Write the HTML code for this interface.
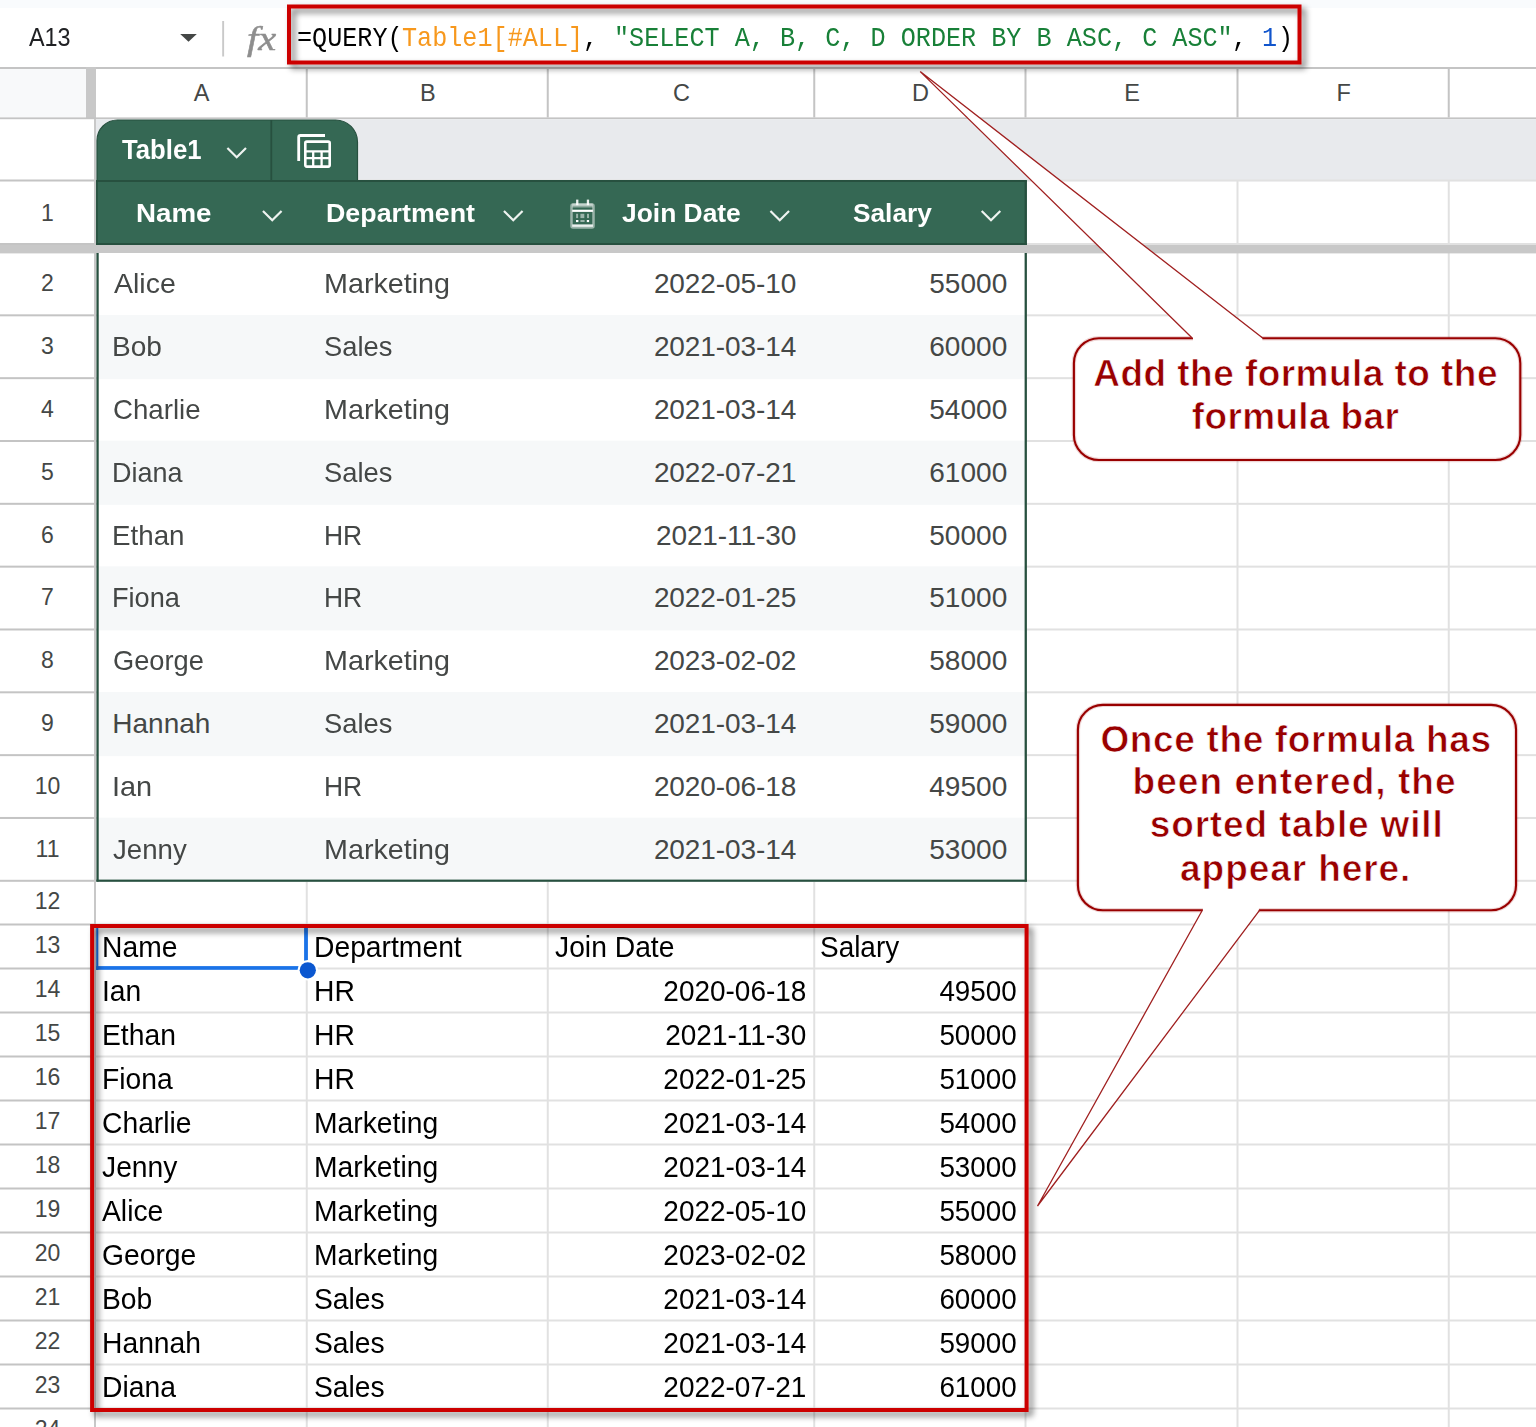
<!DOCTYPE html>
<html lang="en">
<head>
<meta charset="utf-8">
<title>QUERY sorted table – Google Sheets</title>
<style>
html,body{margin:0;padding:0;background:#fff}
body{width:1536px;height:1427px;position:relative;overflow:hidden;font-family:'Liberation Sans',sans-serif}
#gfx{position:absolute;left:0;top:0}
.t{position:absolute;white-space:pre;line-height:1;margin:0;padding:0}
.c{-webkit-text-stroke:0.7px #fff}
.fx{-webkit-text-stroke:0.5px #8e8e8e}
</style>
</head>
<body>
<svg id="gfx" width="1536" height="1427" viewBox="0 0 1536 1427">
<rect x="0" y="0" width="1536" height="8" fill="#f9fbfd"/>
<rect x="0" y="67" width="1536" height="2" fill="#c4c4c4"/>
<rect x="222.2" y="21" width="1.9" height="35.5" fill="#c9c9c9"/>
<rect x="0" y="69" width="86" height="48.5" fill="#f8f9fa"/>
<rect x="86" y="67" width="10" height="52" fill="#c8c8c8"/>
<rect x="0" y="117.4" width="1536" height="1.8" fill="#c4c4c4"/>
<rect x="305.75" y="69" width="2" height="48.5" fill="#c4c4c4"/>
<rect x="546.75" y="69" width="2" height="48.5" fill="#c4c4c4"/>
<rect x="813.25" y="69" width="2" height="48.5" fill="#c4c4c4"/>
<rect x="1024.5" y="69" width="2" height="48.5" fill="#c4c4c4"/>
<rect x="1236.5" y="69" width="2" height="48.5" fill="#c4c4c4"/>
<rect x="1447.75" y="69" width="2" height="48.5" fill="#c4c4c4"/>
<rect x="94" y="119" width="2" height="1308" fill="#c8c8c8"/>
<rect x="96" y="119.2" width="1440" height="62" fill="#e8eaed"/>
<rect x="305.75" y="181" width="2" height="1246" fill="#e1e1e1"/>
<rect x="546.75" y="181" width="2" height="1246" fill="#e1e1e1"/>
<rect x="813.25" y="181" width="2" height="1246" fill="#e1e1e1"/>
<rect x="1024.5" y="181" width="2" height="1246" fill="#e1e1e1"/>
<rect x="1236.5" y="181" width="2" height="1246" fill="#e1e1e1"/>
<rect x="1447.75" y="181" width="2" height="1246" fill="#e1e1e1"/>
<rect x="0" y="179.5" width="94" height="2" fill="#c4c4c4"/>
<rect x="96" y="179.5" width="1440" height="2" fill="#e1e1e1"/>
<rect x="0" y="243" width="94" height="2" fill="#c4c4c4"/>
<rect x="96" y="243" width="1440" height="2" fill="#e1e1e1"/>
<rect x="0" y="314.33" width="94" height="2" fill="#c4c4c4"/>
<rect x="96" y="314.33" width="1440" height="2" fill="#e1e1e1"/>
<rect x="0" y="377.16" width="94" height="2" fill="#c4c4c4"/>
<rect x="96" y="377.16" width="1440" height="2" fill="#e1e1e1"/>
<rect x="0" y="439.99" width="94" height="2" fill="#c4c4c4"/>
<rect x="96" y="439.99" width="1440" height="2" fill="#e1e1e1"/>
<rect x="0" y="502.82" width="94" height="2" fill="#c4c4c4"/>
<rect x="96" y="502.82" width="1440" height="2" fill="#e1e1e1"/>
<rect x="0" y="565.65" width="94" height="2" fill="#c4c4c4"/>
<rect x="96" y="565.65" width="1440" height="2" fill="#e1e1e1"/>
<rect x="0" y="628.48" width="94" height="2" fill="#c4c4c4"/>
<rect x="96" y="628.48" width="1440" height="2" fill="#e1e1e1"/>
<rect x="0" y="691.31" width="94" height="2" fill="#c4c4c4"/>
<rect x="96" y="691.31" width="1440" height="2" fill="#e1e1e1"/>
<rect x="0" y="754.14" width="94" height="2" fill="#c4c4c4"/>
<rect x="96" y="754.14" width="1440" height="2" fill="#e1e1e1"/>
<rect x="0" y="816.97" width="94" height="2" fill="#c4c4c4"/>
<rect x="96" y="816.97" width="1440" height="2" fill="#e1e1e1"/>
<rect x="0" y="879.8" width="94" height="2" fill="#c4c4c4"/>
<rect x="96" y="879.8" width="1440" height="2" fill="#e1e1e1"/>
<rect x="0" y="923.5" width="94" height="2" fill="#c4c4c4"/>
<rect x="96" y="923.5" width="1440" height="2" fill="#e1e1e1"/>
<rect x="0" y="967.5" width="94" height="2" fill="#c4c4c4"/>
<rect x="96" y="967.5" width="1440" height="2" fill="#e1e1e1"/>
<rect x="0" y="1011.5" width="94" height="2" fill="#c4c4c4"/>
<rect x="96" y="1011.5" width="1440" height="2" fill="#e1e1e1"/>
<rect x="0" y="1055.5" width="94" height="2" fill="#c4c4c4"/>
<rect x="96" y="1055.5" width="1440" height="2" fill="#e1e1e1"/>
<rect x="0" y="1099.5" width="94" height="2" fill="#c4c4c4"/>
<rect x="96" y="1099.5" width="1440" height="2" fill="#e1e1e1"/>
<rect x="0" y="1143.5" width="94" height="2" fill="#c4c4c4"/>
<rect x="96" y="1143.5" width="1440" height="2" fill="#e1e1e1"/>
<rect x="0" y="1187.5" width="94" height="2" fill="#c4c4c4"/>
<rect x="96" y="1187.5" width="1440" height="2" fill="#e1e1e1"/>
<rect x="0" y="1231.5" width="94" height="2" fill="#c4c4c4"/>
<rect x="96" y="1231.5" width="1440" height="2" fill="#e1e1e1"/>
<rect x="0" y="1275.5" width="94" height="2" fill="#c4c4c4"/>
<rect x="96" y="1275.5" width="1440" height="2" fill="#e1e1e1"/>
<rect x="0" y="1319.5" width="94" height="2" fill="#c4c4c4"/>
<rect x="96" y="1319.5" width="1440" height="2" fill="#e1e1e1"/>
<rect x="0" y="1363.5" width="94" height="2" fill="#c4c4c4"/>
<rect x="96" y="1363.5" width="1440" height="2" fill="#e1e1e1"/>
<rect x="0" y="1407.5" width="94" height="2" fill="#c4c4c4"/>
<rect x="96" y="1407.5" width="1440" height="2" fill="#e1e1e1"/>
<rect x="0" y="245" width="1536" height="8.4" fill="#c8c8c8"/>
<path d="M97 181.5 V140.5 A20.5 20.5 0 0 1 117.5 120 H335.5 A22 22 0 0 1 357.5 142 V181.5 Z" fill="#356854" stroke="#27503f" stroke-width="1.2"/>
<rect x="270.4" y="120" width="1.8" height="61" fill="#27503f"/>
<rect x="96" y="180" width="930.8" height="65" fill="#356854"/>
<rect x="96" y="180" width="930.8" height="2" fill="#27503f"/>
<rect x="96" y="243" width="930.8" height="2" fill="#27503f"/>
<rect x="1024.6" y="181" width="2.2" height="64" fill="#27503f"/>
<rect x="96.2" y="181" width="1.6" height="64" fill="#27503f"/>
<rect x="97" y="253" width="929" height="627.5" fill="#ffffff"/>
<rect x="98" y="315.03" width="927" height="64.13" fill="#f6f8f9"/>
<rect x="98" y="440.69" width="927" height="64.13" fill="#f6f8f9"/>
<rect x="98" y="566.35" width="927" height="64.13" fill="#f6f8f9"/>
<rect x="98" y="692.01" width="927" height="64.13" fill="#f6f8f9"/>
<rect x="98" y="817.67" width="927" height="64.13" fill="#f6f8f9"/>
<rect x="96.4" y="253" width="2.3" height="628.5" fill="#27503f"/>
<rect x="1024.6" y="253" width="2.3" height="628.5" fill="#27503f"/>
<rect x="96.4" y="879.6" width="930.5" height="2.2" fill="#27503f"/>
<path d="M227.4 147.95 L236.7 157.25 L246 147.95" fill="none" stroke="#eef3f0" stroke-width="2.2" stroke-linejoin="miter"/>
<path d="M262.95 210.95 L272.25 220.25 L281.55 210.95" fill="none" stroke="#eef3f0" stroke-width="2.2" stroke-linejoin="miter"/>
<path d="M503.95 210.95 L513.25 220.25 L522.55 210.95" fill="none" stroke="#eef3f0" stroke-width="2.2" stroke-linejoin="miter"/>
<path d="M770.45 210.95 L779.75 220.25 L789.05 210.95" fill="none" stroke="#eef3f0" stroke-width="2.2" stroke-linejoin="miter"/>
<path d="M981.7 210.95 L991 220.25 L1000.3 210.95" fill="none" stroke="#eef3f0" stroke-width="2.2" stroke-linejoin="miter"/>
<g id="tblicon" fill="none" stroke="#fff"><path d="M298.7 161 V137.2 Q298.7 135.5 300.4 135.5 H325" stroke-width="2.8"/><rect x="305.3" y="141.6" width="24.4" height="25" rx="1.5" stroke-width="2.6"/><path d="M305.3 151.3 H329.7 M305.3 158.2 H329.7" stroke-width="2.2"/><path d="M313.2 151.3 V166.6 M321.6 151.3 V166.6" stroke-width="2.3"/></g>
<g id="calicon"><rect x="571.5" y="204.6" width="22" height="23" rx="1.5" fill="none" stroke="#fff" stroke-opacity="0.5" stroke-width="2.5"/><rect x="572.2" y="203.5" width="20.6" height="4" fill="#fff" fill-opacity="0.45"/><rect x="572.2" y="209.7" width="20.7" height="2.2" fill="#fff"/><rect x="572.2" y="224.4" width="20.7" height="2.4" fill="#fff" fill-opacity="0.9"/><rect x="576.1" y="199.6" width="2.3" height="5.6" fill="#fff" fill-opacity="0.9"/><rect x="586.8" y="199.6" width="2.3" height="5.6" fill="#fff" fill-opacity="0.9"/><g fill="#fff" fill-opacity="0.5"><rect x="576.1" y="213.8" width="2" height="4.3"/><rect x="580.4" y="213.8" width="3.9" height="4.3"/><rect x="587" y="213.8" width="2" height="4.3"/><rect x="580.4" y="220" width="4.2" height="2"/></g><rect x="576" y="220" width="2.4" height="2.1" fill="#fff"/><rect x="586.8" y="220" width="2.3" height="2.1" fill="#fff"/></g>
<rect x="96.2" y="926" width="2.1" height="44" fill="#1a73e8"/>
<rect x="304.1" y="926" width="3.8" height="42" fill="#1a73e8"/>
<rect x="96.2" y="966.1" width="211.7" height="3.7" fill="#1a73e8"/>
<circle cx="307.8" cy="970.3" r="10.3" fill="#fff"/>
<circle cx="307.8" cy="970.3" r="8.1" fill="#0b57d0"/>
<defs><filter id="sh" x="-5%" y="-20%" width="110%" height="150%"><feGaussianBlur in="SourceAlpha" stdDeviation="3.4"/><feOffset dx="3.8" dy="3.8"/><feComponentTransfer><feFuncA type="linear" slope="0.55"/></feComponentTransfer><feMerge><feMergeNode/><feMergeNode in="SourceGraphic"/></feMerge></filter></defs>
<rect x="289" y="6.5" width="1010.5" height="56" fill="none" stroke="#cc0000" stroke-width="4" filter="url(#sh)"/>
<rect x="92.1" y="926" width="934.5" height="484" fill="none" stroke="#cc0000" stroke-width="4" filter="url(#sh)"/>
<path d="M1098.9 338.2 H1495.3 A25 25 0 0 1 1520.3 363.2 V435 A25 25 0 0 1 1495.3 460 H1098.9 A25 25 0 0 1 1073.9 435 V363.2 A25 25 0 0 1 1098.9 338.2 Z" fill="#fff" stroke="#990000" stroke-opacity="0.16" stroke-width="4.4"/>
<path d="M1098.9 338.2 H1495.3 A25 25 0 0 1 1520.3 363.2 V435 A25 25 0 0 1 1495.3 460 H1098.9 A25 25 0 0 1 1073.9 435 V363.2 A25 25 0 0 1 1098.9 338.2 Z" fill="none" stroke="#990000" stroke-width="2.1"/>
<path d="M1193 341.2 L1193 338.2 L920.2 71.6 L1262.4 338.2 L1262.4 341.2 Z" fill="#fff"/>
<path d="M1192.4 338.2 L920.2 71.6 L1263 338.2" fill="none" stroke="#a02020" stroke-width="1.3" stroke-linejoin="miter"/>
<path d="M1102.9 704.85 H1491.05 A25 25 0 0 1 1516.05 729.85 V885.3 A25 25 0 0 1 1491.05 910.3 H1102.9 A25 25 0 0 1 1077.9 885.3 V729.85 A25 25 0 0 1 1102.9 704.85 Z" fill="#fff" stroke="#990000" stroke-opacity="0.16" stroke-width="4.4"/>
<path d="M1102.9 704.85 H1491.05 A25 25 0 0 1 1516.05 729.85 V885.3 A25 25 0 0 1 1491.05 910.3 H1102.9 A25 25 0 0 1 1077.9 885.3 V729.85 A25 25 0 0 1 1102.9 704.85 Z" fill="none" stroke="#990000" stroke-width="2.1"/>
<path d="M1202.9 907.3 L1202.9 910.3 L1037.5 1206 L1258.9 910.3 L1258.9 907.3 Z" fill="#fff"/>
<path d="M1202.3 910.3 L1037.5 1206 L1259.5 910.3" fill="none" stroke="#a02020" stroke-width="1.3" stroke-linejoin="miter"/>
<path d="M180.2 34 H196.8 L188.5 41.8 Z" fill="#444746"/>
</svg>
<div class="name-box">
<span class="t" style="top:23.50px;font-size:26px;color:#202124;left:29.30px;transform:scaleX(0.8992);transform-origin:0 50%">A13</span>
</div>
<div class="formula-bar">
<span class="t fx" style="top:21.60px;font-size:33.5px;color:#8e8e8e;font-family:'Liberation Serif',serif;font-style:italic;left:247.30px;transform:scaleX(1.2054);transform-origin:0 50%">fx</span>
<span class="t f" style="top:24.50px;font-size:27.5px;color:#000;font-family:'Liberation Mono',monospace;left:296.70px;transform:scaleX(0.9144);transform-origin:0 50%">=QUERY(</span>
<span class="t f" style="top:24.50px;font-size:27.5px;color:#f7981d;font-family:'Liberation Mono',monospace;left:402.33px;transform:scaleX(0.9144);transform-origin:0 50%">Table1[#ALL]</span>
<span class="t f" style="top:24.50px;font-size:27.5px;color:#000;font-family:'Liberation Mono',monospace;left:583.41px;transform:scaleX(0.9144);transform-origin:0 50%">, </span>
<span class="t f" style="top:24.50px;font-size:27.5px;color:#188038;font-family:'Liberation Mono',monospace;left:613.59px;transform:scaleX(0.9144);transform-origin:0 50%">"SELECT A, B, C, D ORDER BY B ASC, C ASC"</span>
<span class="t f" style="top:24.50px;font-size:27.5px;color:#000;font-family:'Liberation Mono',monospace;left:1232.28px;transform:scaleX(0.9144);transform-origin:0 50%">, </span>
<span class="t f" style="top:24.50px;font-size:27.5px;color:#1155cc;font-family:'Liberation Mono',monospace;left:1262.46px;transform:scaleX(0.9144);transform-origin:0 50%">1</span>
<span class="t f" style="top:24.50px;font-size:27.5px;color:#000;font-family:'Liberation Mono',monospace;left:1277.55px;transform:scaleX(0.9144);transform-origin:0 50%">)</span>
</div>
<div class="column-headers">
<span class="t" style="top:81.70px;font-size:23.5px;color:#444746;left:201.62px;transform:translateX(-50%);transform-origin:50% 50%">A</span>
<span class="t" style="top:81.70px;font-size:23.5px;color:#444746;left:427.75px;transform:translateX(-50%);transform-origin:50% 50%">B</span>
<span class="t" style="top:81.70px;font-size:23.5px;color:#444746;left:681.50px;transform:translateX(-50%);transform-origin:50% 50%">C</span>
<span class="t" style="top:81.70px;font-size:23.5px;color:#444746;left:920.38px;transform:translateX(-50%);transform-origin:50% 50%">D</span>
<span class="t" style="top:81.70px;font-size:23.5px;color:#444746;left:1132.00px;transform:translateX(-50%);transform-origin:50% 50%">E</span>
<span class="t" style="top:81.70px;font-size:23.5px;color:#444746;left:1343.62px;transform:translateX(-50%);transform-origin:50% 50%">F</span>
</div>
<div class="row-headers">
<span class="t" style="top:202.20px;font-size:23px;color:#444746;left:47.50px;transform:translateX(-50%);transform-origin:50% 50%">1</span>
<span class="t" style="top:272.21px;font-size:23px;color:#444746;left:47.50px;transform:translateX(-50%);transform-origin:50% 50%">2</span>
<span class="t" style="top:335.05px;font-size:23px;color:#444746;left:47.50px;transform:translateX(-50%);transform-origin:50% 50%">3</span>
<span class="t" style="top:397.88px;font-size:23px;color:#444746;left:47.50px;transform:translateX(-50%);transform-origin:50% 50%">4</span>
<span class="t" style="top:460.70px;font-size:23px;color:#444746;left:47.50px;transform:translateX(-50%);transform-origin:50% 50%">5</span>
<span class="t" style="top:523.53px;font-size:23px;color:#444746;left:47.50px;transform:translateX(-50%);transform-origin:50% 50%">6</span>
<span class="t" style="top:586.37px;font-size:23px;color:#444746;left:47.50px;transform:translateX(-50%);transform-origin:50% 50%">7</span>
<span class="t" style="top:649.19px;font-size:23px;color:#444746;left:47.50px;transform:translateX(-50%);transform-origin:50% 50%">8</span>
<span class="t" style="top:712.02px;font-size:23px;color:#444746;left:47.50px;transform:translateX(-50%);transform-origin:50% 50%">9</span>
<span class="t" style="top:774.86px;font-size:23px;color:#444746;left:47.50px;transform:translateX(-50%);transform-origin:50% 50%">10</span>
<span class="t" style="top:837.68px;font-size:23px;color:#444746;left:47.50px;transform:translateX(-50%);transform-origin:50% 50%">11</span>
<span class="t" style="top:890.30px;font-size:23px;color:#444746;left:47.50px;transform:translateX(-50%);transform-origin:50% 50%">12</span>
<span class="t" style="top:933.50px;font-size:23px;color:#444746;left:47.50px;transform:translateX(-50%);transform-origin:50% 50%">13</span>
<span class="t" style="top:977.50px;font-size:23px;color:#444746;left:47.50px;transform:translateX(-50%);transform-origin:50% 50%">14</span>
<span class="t" style="top:1021.50px;font-size:23px;color:#444746;left:47.50px;transform:translateX(-50%);transform-origin:50% 50%">15</span>
<span class="t" style="top:1065.50px;font-size:23px;color:#444746;left:47.50px;transform:translateX(-50%);transform-origin:50% 50%">16</span>
<span class="t" style="top:1109.50px;font-size:23px;color:#444746;left:47.50px;transform:translateX(-50%);transform-origin:50% 50%">17</span>
<span class="t" style="top:1153.50px;font-size:23px;color:#444746;left:47.50px;transform:translateX(-50%);transform-origin:50% 50%">18</span>
<span class="t" style="top:1197.50px;font-size:23px;color:#444746;left:47.50px;transform:translateX(-50%);transform-origin:50% 50%">19</span>
<span class="t" style="top:1241.50px;font-size:23px;color:#444746;left:47.50px;transform:translateX(-50%);transform-origin:50% 50%">20</span>
<span class="t" style="top:1285.50px;font-size:23px;color:#444746;left:47.50px;transform:translateX(-50%);transform-origin:50% 50%">21</span>
<span class="t" style="top:1329.50px;font-size:23px;color:#444746;left:47.50px;transform:translateX(-50%);transform-origin:50% 50%">22</span>
<span class="t" style="top:1373.50px;font-size:23px;color:#444746;left:47.50px;transform:translateX(-50%);transform-origin:50% 50%">23</span>
<span class="t" style="top:1417.50px;font-size:23px;color:#444746;left:47.50px;transform:translateX(-50%);transform-origin:50% 50%">24</span>
</div>
<div class="table-header">
<span class="t" style="top:135.80px;font-size:28px;color:#fff;font-weight:700;left:121.50px;transform:scaleX(0.9177);transform-origin:0 50%">Table1</span>
<span class="t" style="top:199.80px;font-size:26.5px;color:#fff;font-weight:700;left:135.60px;transform:scaleX(1.0461);transform-origin:0 50%">Name</span>
<span class="t" style="top:199.80px;font-size:26.5px;color:#fff;font-weight:700;left:325.90px;transform:scaleX(1.0119);transform-origin:0 50%">Department</span>
<span class="t" style="top:199.80px;font-size:26.5px;color:#fff;font-weight:700;left:622.00px;transform:scaleX(0.9960);transform-origin:0 50%">Join Date</span>
<span class="t" style="top:199.80px;font-size:26.5px;color:#fff;font-weight:700;left:853.20px;transform:scaleX(0.9904);transform-origin:0 50%">Salary</span>
</div>
<div class="table-body">
<span class="t" style="top:270.30px;font-size:28px;color:#444746;left:113.50px;transform:scaleX(1.0180);transform-origin:0 50%">Alice</span>
<span class="t" style="top:270.30px;font-size:28px;color:#444746;left:323.95px;transform:scaleX(1.0254);transform-origin:0 50%">Marketing</span>
<span class="t" style="top:270.30px;font-size:28px;color:#444746;letter-spacing:-0.1px;right:739.90px">2022-05-10</span>
<span class="t" style="top:270.30px;font-size:28px;color:#444746;letter-spacing:0.08px;right:528.62px">55000</span>
<span class="t" style="top:333.13px;font-size:28px;color:#444746;left:112.29px;transform:scaleX(1.0032);transform-origin:0 50%">Bob</span>
<span class="t" style="top:333.13px;font-size:28px;color:#444746;left:324.32px;transform:scaleX(0.9759);transform-origin:0 50%">Sales</span>
<span class="t" style="top:333.13px;font-size:28px;color:#444746;letter-spacing:-0.1px;right:739.90px">2021-03-14</span>
<span class="t" style="top:333.13px;font-size:28px;color:#444746;letter-spacing:0.08px;right:528.62px">60000</span>
<span class="t" style="top:395.96px;font-size:28px;color:#444746;left:112.51px;transform:scaleX(0.9870);transform-origin:0 50%">Charlie</span>
<span class="t" style="top:395.96px;font-size:28px;color:#444746;left:323.95px;transform:scaleX(1.0254);transform-origin:0 50%">Marketing</span>
<span class="t" style="top:395.96px;font-size:28px;color:#444746;letter-spacing:-0.1px;right:739.90px">2021-03-14</span>
<span class="t" style="top:395.96px;font-size:28px;color:#444746;letter-spacing:0.08px;right:528.62px">54000</span>
<span class="t" style="top:458.79px;font-size:28px;color:#444746;left:112.37px;transform:scaleX(0.9639);transform-origin:0 50%">Diana</span>
<span class="t" style="top:458.79px;font-size:28px;color:#444746;left:324.32px;transform:scaleX(0.9759);transform-origin:0 50%">Sales</span>
<span class="t" style="top:458.79px;font-size:28px;color:#444746;letter-spacing:-0.1px;right:739.90px">2022-07-21</span>
<span class="t" style="top:458.79px;font-size:28px;color:#444746;letter-spacing:0.08px;right:528.62px">61000</span>
<span class="t" style="top:521.62px;font-size:28px;color:#444746;left:112.32px;transform:scaleX(0.9914);transform-origin:0 50%">Ethan</span>
<span class="t" style="top:521.62px;font-size:28px;color:#444746;left:324.11px;transform:scaleX(0.9457);transform-origin:0 50%">HR</span>
<span class="t" style="top:521.62px;font-size:28px;color:#444746;letter-spacing:-0.1px;right:739.90px">2021-11-30</span>
<span class="t" style="top:521.62px;font-size:28px;color:#444746;letter-spacing:0.08px;right:528.62px">50000</span>
<span class="t" style="top:584.45px;font-size:28px;color:#444746;left:112.36px;transform:scaleX(0.9698);transform-origin:0 50%">Fiona</span>
<span class="t" style="top:584.45px;font-size:28px;color:#444746;left:324.11px;transform:scaleX(0.9457);transform-origin:0 50%">HR</span>
<span class="t" style="top:584.45px;font-size:28px;color:#444746;letter-spacing:-0.1px;right:739.90px">2022-01-25</span>
<span class="t" style="top:584.45px;font-size:28px;color:#444746;letter-spacing:0.08px;right:528.62px">51000</span>
<span class="t" style="top:647.28px;font-size:28px;color:#444746;left:112.53px;transform:scaleX(0.9726);transform-origin:0 50%">George</span>
<span class="t" style="top:647.28px;font-size:28px;color:#444746;left:323.95px;transform:scaleX(1.0254);transform-origin:0 50%">Marketing</span>
<span class="t" style="top:647.28px;font-size:28px;color:#444746;letter-spacing:-0.1px;right:739.90px">2023-02-02</span>
<span class="t" style="top:647.28px;font-size:28px;color:#444746;letter-spacing:0.08px;right:528.62px">58000</span>
<span class="t" style="top:710.11px;font-size:28px;color:#444746;left:112.30px">Hannah</span>
<span class="t" style="top:710.11px;font-size:28px;color:#444746;left:324.32px;transform:scaleX(0.9759);transform-origin:0 50%">Sales</span>
<span class="t" style="top:710.11px;font-size:28px;color:#444746;letter-spacing:-0.1px;right:739.90px">2021-03-14</span>
<span class="t" style="top:710.11px;font-size:28px;color:#444746;letter-spacing:0.08px;right:528.62px">59000</span>
<span class="t" style="top:772.94px;font-size:28px;color:#444746;left:112.24px;transform:scaleX(1.0325);transform-origin:0 50%">Ian</span>
<span class="t" style="top:772.94px;font-size:28px;color:#444746;left:324.11px;transform:scaleX(0.9457);transform-origin:0 50%">HR</span>
<span class="t" style="top:772.94px;font-size:28px;color:#444746;letter-spacing:-0.1px;right:739.90px">2020-06-18</span>
<span class="t" style="top:772.94px;font-size:28px;color:#444746;letter-spacing:0.08px;right:528.62px">49500</span>
<span class="t" style="top:835.77px;font-size:28px;color:#444746;left:113.00px;transform:scaleX(0.9864);transform-origin:0 50%">Jenny</span>
<span class="t" style="top:835.77px;font-size:28px;color:#444746;left:323.95px;transform:scaleX(1.0254);transform-origin:0 50%">Marketing</span>
<span class="t" style="top:835.77px;font-size:28px;color:#444746;letter-spacing:-0.1px;right:739.90px">2021-03-14</span>
<span class="t" style="top:835.77px;font-size:28px;color:#444746;letter-spacing:0.08px;right:528.62px">53000</span>
</div>
<div class="query-result">
<span class="t" style="top:933.40px;font-size:29px;color:#000;left:102.30px;transform:scaleX(0.9750);transform-origin:0 50%">Name</span>
<span class="t" style="top:933.40px;font-size:29px;color:#000;left:313.80px;transform:scaleX(0.9750);transform-origin:0 50%">Department</span>
<span class="t" style="top:933.40px;font-size:29px;color:#000;left:554.80px;transform:scaleX(0.9750);transform-origin:0 50%">Join Date</span>
<span class="t" style="top:933.40px;font-size:29px;color:#000;left:820.20px;transform:scaleX(0.9630);transform-origin:0 50%">Salary</span>
<span class="t" style="top:977.40px;font-size:29px;color:#000;left:102.30px;transform:scaleX(0.9750);transform-origin:0 50%">Ian</span>
<span class="t" style="top:977.40px;font-size:29px;color:#000;left:313.80px;transform:scaleX(0.9750);transform-origin:0 50%">HR</span>
<span class="t" style="top:977.40px;font-size:29px;color:#000;right:730.10px;transform:scaleX(0.9640);transform-origin:100% 50%">2020-06-18</span>
<span class="t" style="top:977.40px;font-size:29px;color:#000;right:519.10px;transform:scaleX(0.9580);transform-origin:100% 50%">49500</span>
<span class="t" style="top:1021.40px;font-size:29px;color:#000;left:102.30px;transform:scaleX(0.9750);transform-origin:0 50%">Ethan</span>
<span class="t" style="top:1021.40px;font-size:29px;color:#000;left:313.80px;transform:scaleX(0.9750);transform-origin:0 50%">HR</span>
<span class="t" style="top:1021.40px;font-size:29px;color:#000;right:730.10px;transform:scaleX(0.9640);transform-origin:100% 50%">2021-11-30</span>
<span class="t" style="top:1021.40px;font-size:29px;color:#000;right:519.10px;transform:scaleX(0.9580);transform-origin:100% 50%">50000</span>
<span class="t" style="top:1065.40px;font-size:29px;color:#000;left:102.30px;transform:scaleX(0.9750);transform-origin:0 50%">Fiona</span>
<span class="t" style="top:1065.40px;font-size:29px;color:#000;left:313.80px;transform:scaleX(0.9750);transform-origin:0 50%">HR</span>
<span class="t" style="top:1065.40px;font-size:29px;color:#000;right:730.10px;transform:scaleX(0.9640);transform-origin:100% 50%">2022-01-25</span>
<span class="t" style="top:1065.40px;font-size:29px;color:#000;right:519.10px;transform:scaleX(0.9580);transform-origin:100% 50%">51000</span>
<span class="t" style="top:1109.40px;font-size:29px;color:#000;left:102.30px;transform:scaleX(0.9750);transform-origin:0 50%">Charlie</span>
<span class="t" style="top:1109.40px;font-size:29px;color:#000;left:313.80px;transform:scaleX(0.9750);transform-origin:0 50%">Marketing</span>
<span class="t" style="top:1109.40px;font-size:29px;color:#000;right:730.10px;transform:scaleX(0.9640);transform-origin:100% 50%">2021-03-14</span>
<span class="t" style="top:1109.40px;font-size:29px;color:#000;right:519.10px;transform:scaleX(0.9580);transform-origin:100% 50%">54000</span>
<span class="t" style="top:1153.40px;font-size:29px;color:#000;left:102.30px;transform:scaleX(0.9750);transform-origin:0 50%">Jenny</span>
<span class="t" style="top:1153.40px;font-size:29px;color:#000;left:313.80px;transform:scaleX(0.9750);transform-origin:0 50%">Marketing</span>
<span class="t" style="top:1153.40px;font-size:29px;color:#000;right:730.10px;transform:scaleX(0.9640);transform-origin:100% 50%">2021-03-14</span>
<span class="t" style="top:1153.40px;font-size:29px;color:#000;right:519.10px;transform:scaleX(0.9580);transform-origin:100% 50%">53000</span>
<span class="t" style="top:1197.40px;font-size:29px;color:#000;left:102.30px;transform:scaleX(0.9750);transform-origin:0 50%">Alice</span>
<span class="t" style="top:1197.40px;font-size:29px;color:#000;left:313.80px;transform:scaleX(0.9750);transform-origin:0 50%">Marketing</span>
<span class="t" style="top:1197.40px;font-size:29px;color:#000;right:730.10px;transform:scaleX(0.9640);transform-origin:100% 50%">2022-05-10</span>
<span class="t" style="top:1197.40px;font-size:29px;color:#000;right:519.10px;transform:scaleX(0.9580);transform-origin:100% 50%">55000</span>
<span class="t" style="top:1241.40px;font-size:29px;color:#000;left:102.30px;transform:scaleX(0.9750);transform-origin:0 50%">George</span>
<span class="t" style="top:1241.40px;font-size:29px;color:#000;left:313.80px;transform:scaleX(0.9750);transform-origin:0 50%">Marketing</span>
<span class="t" style="top:1241.40px;font-size:29px;color:#000;right:730.10px;transform:scaleX(0.9640);transform-origin:100% 50%">2023-02-02</span>
<span class="t" style="top:1241.40px;font-size:29px;color:#000;right:519.10px;transform:scaleX(0.9580);transform-origin:100% 50%">58000</span>
<span class="t" style="top:1285.40px;font-size:29px;color:#000;left:102.30px;transform:scaleX(0.9750);transform-origin:0 50%">Bob</span>
<span class="t" style="top:1285.40px;font-size:29px;color:#000;left:313.80px;transform:scaleX(0.9750);transform-origin:0 50%">Sales</span>
<span class="t" style="top:1285.40px;font-size:29px;color:#000;right:730.10px;transform:scaleX(0.9640);transform-origin:100% 50%">2021-03-14</span>
<span class="t" style="top:1285.40px;font-size:29px;color:#000;right:519.10px;transform:scaleX(0.9580);transform-origin:100% 50%">60000</span>
<span class="t" style="top:1329.40px;font-size:29px;color:#000;left:102.30px;transform:scaleX(0.9750);transform-origin:0 50%">Hannah</span>
<span class="t" style="top:1329.40px;font-size:29px;color:#000;left:313.80px;transform:scaleX(0.9750);transform-origin:0 50%">Sales</span>
<span class="t" style="top:1329.40px;font-size:29px;color:#000;right:730.10px;transform:scaleX(0.9640);transform-origin:100% 50%">2021-03-14</span>
<span class="t" style="top:1329.40px;font-size:29px;color:#000;right:519.10px;transform:scaleX(0.9580);transform-origin:100% 50%">59000</span>
<span class="t" style="top:1373.40px;font-size:29px;color:#000;left:102.30px;transform:scaleX(0.9750);transform-origin:0 50%">Diana</span>
<span class="t" style="top:1373.40px;font-size:29px;color:#000;left:313.80px;transform:scaleX(0.9750);transform-origin:0 50%">Sales</span>
<span class="t" style="top:1373.40px;font-size:29px;color:#000;right:730.10px;transform:scaleX(0.9640);transform-origin:100% 50%">2022-07-21</span>
<span class="t" style="top:1373.40px;font-size:29px;color:#000;right:519.10px;transform:scaleX(0.9580);transform-origin:100% 50%">61000</span>
</div>
<div class="callouts">
<span class="t c" style="top:354.60px;font-size:37px;color:#990000;font-weight:700;letter-spacing:0.45405px;left:1093.30px">Add the formula to the</span>
<span class="t c" style="top:398.20px;font-size:37px;color:#990000;font-weight:700;letter-spacing:0.346279px;left:1191.80px">formula bar</span>
<span class="t c" style="top:720.70px;font-size:37px;color:#990000;font-weight:700;letter-spacing:0.650899px;left:1100.40px">Once the formula has</span>
<span class="t c" style="top:763.00px;font-size:37px;color:#990000;font-weight:700;letter-spacing:1.03285px;left:1132.60px">been entered, the</span>
<span class="t c" style="top:806.00px;font-size:37px;color:#990000;font-weight:700;letter-spacing:0.829126px;left:1149.80px">sorted table will</span>
<span class="t c" style="top:850.00px;font-size:37px;color:#990000;font-weight:700;letter-spacing:0.930087px;left:1180.10px">appear here.</span>
</div>
</body>
</html>
